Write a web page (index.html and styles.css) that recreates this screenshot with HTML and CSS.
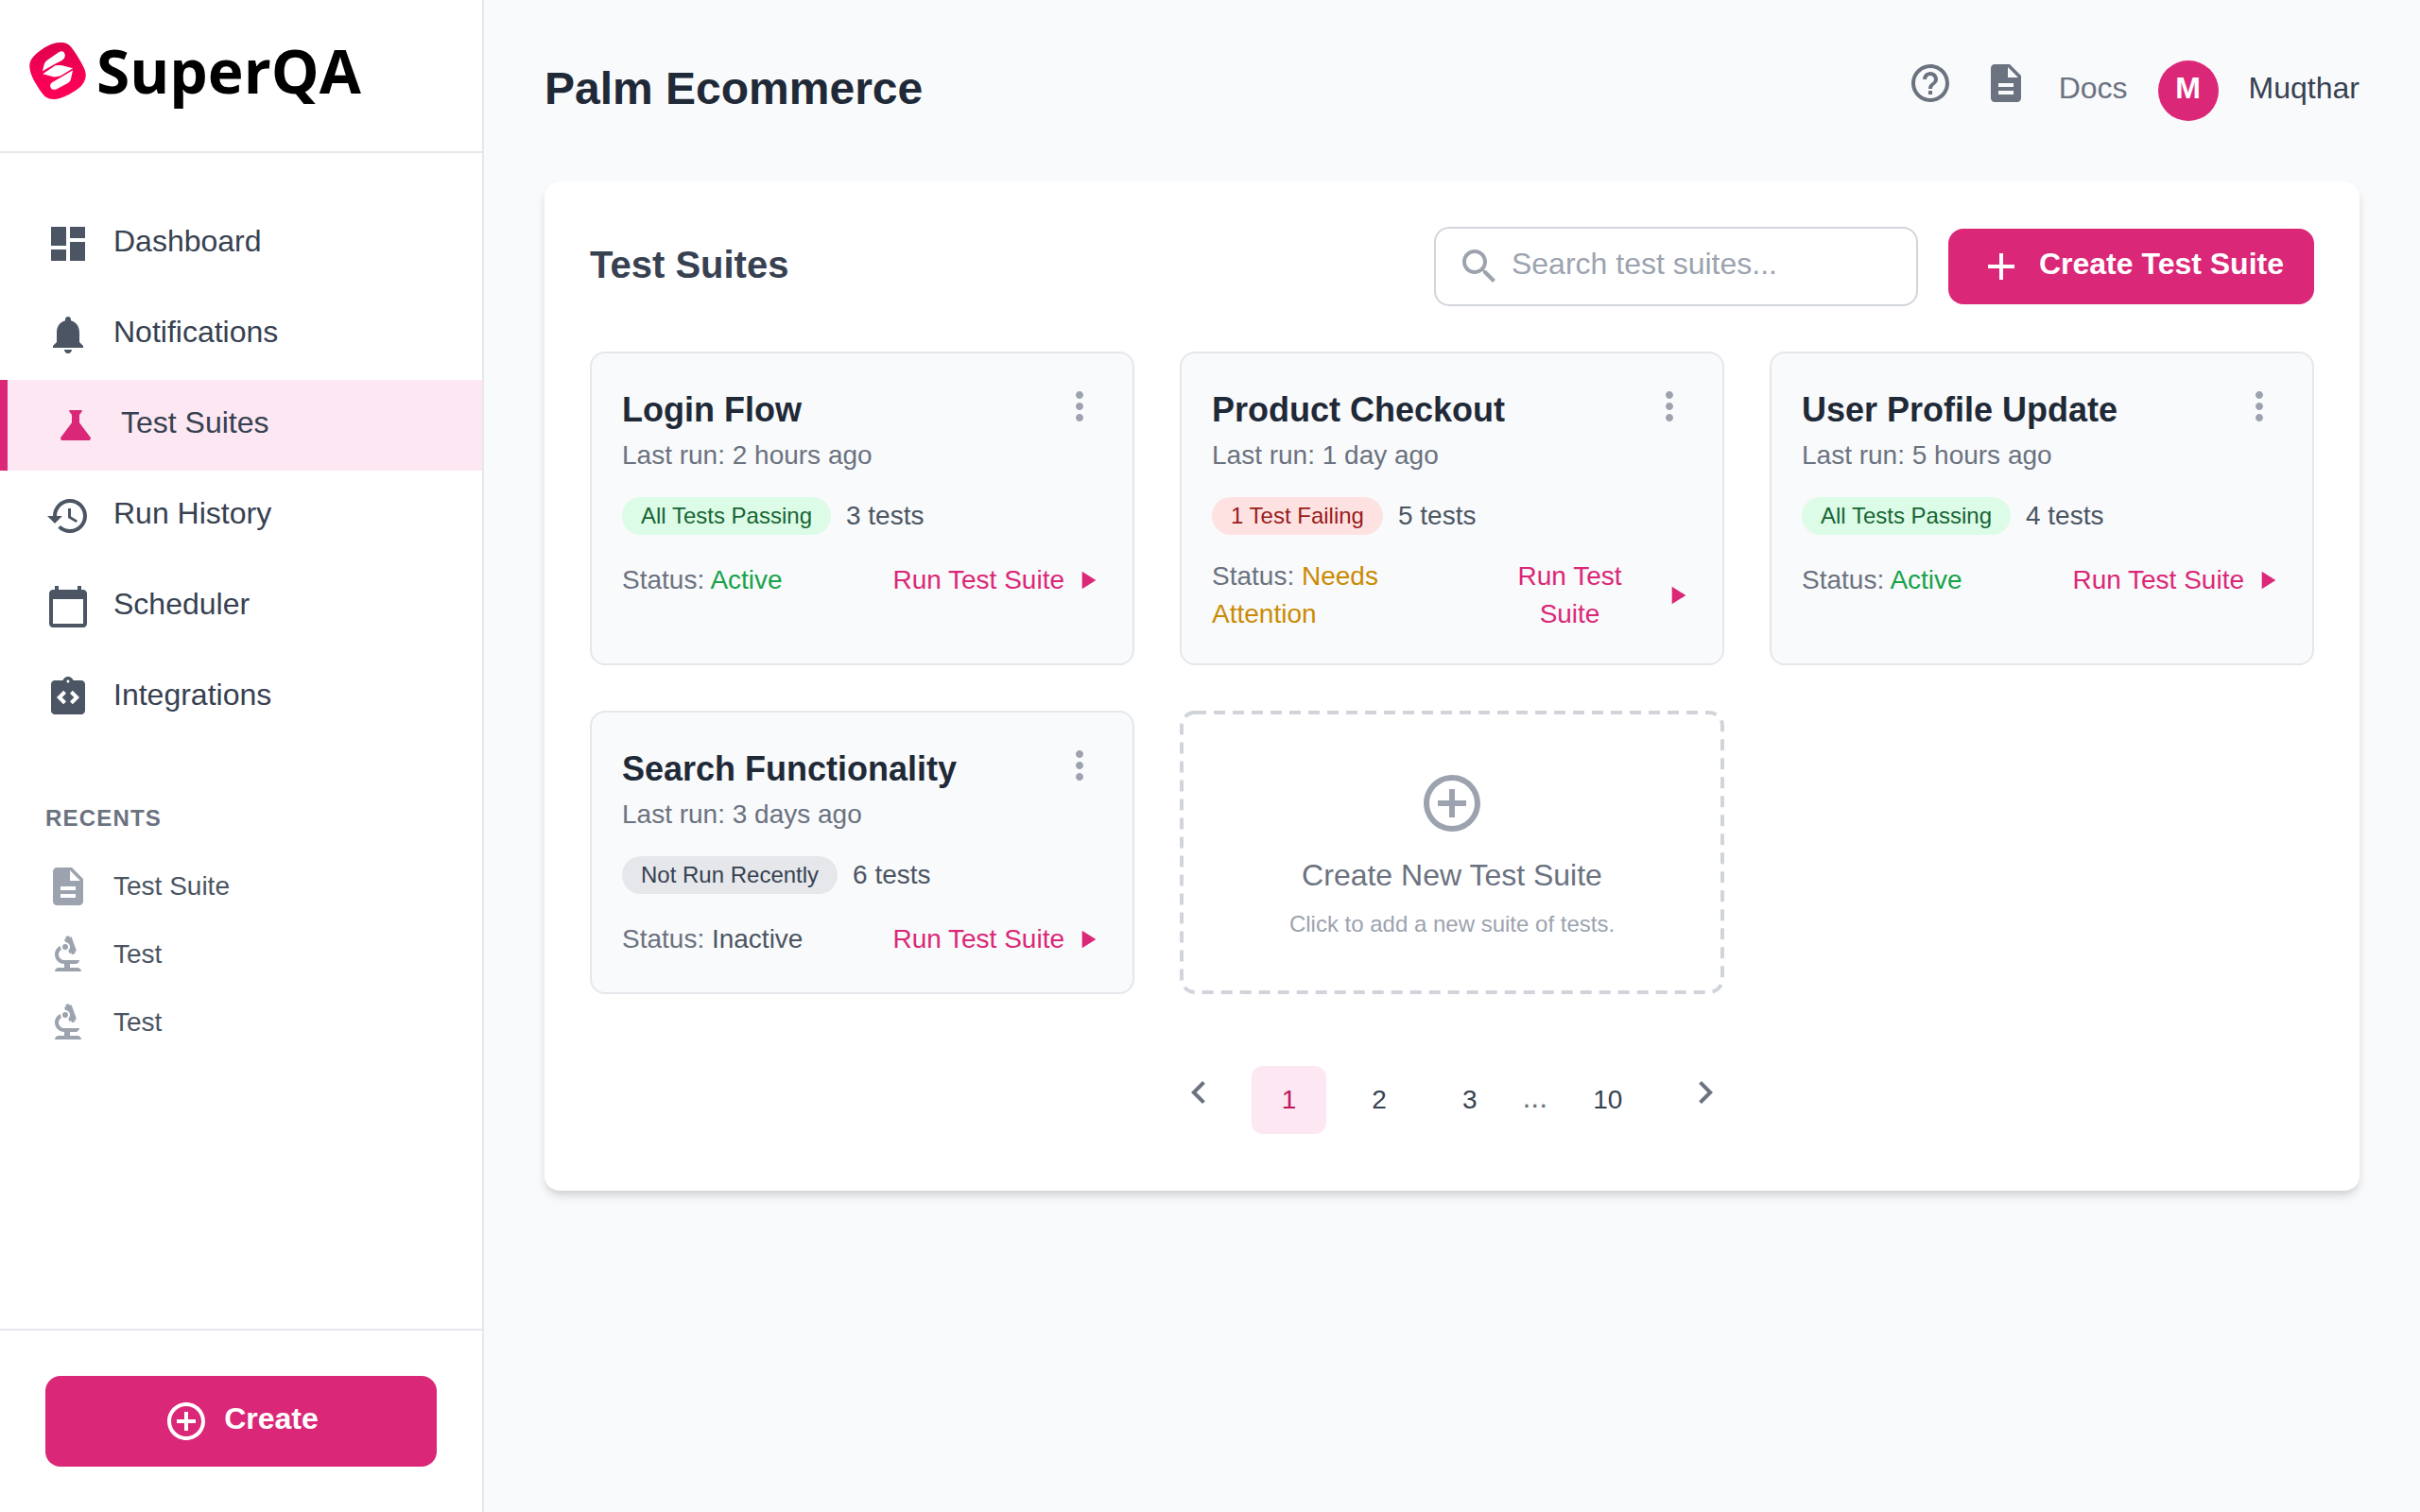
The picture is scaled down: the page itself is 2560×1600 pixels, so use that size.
FILE: index.html
```html
<!DOCTYPE html>
<html lang="en">
<head>
  <meta charset="UTF-8" />
  <meta name="viewport" content="width=device-width, initial-scale=1.0"/>
  <title>SuperQA - Test Suites</title>
  <link rel="stylesheet" href="styles.css">
</head>
<body>
  <!-- Icon set -->
  <svg class="sprite" xmlns="http://www.w3.org/2000/svg">
    <symbol id="dashboard" viewBox="0 0 24 24"><path d="M3 13h8V3H3v10zm0 8h8v-6H3v6zm10 0h8V11h-8v10zm0-18v6h8V3h-8z"/></symbol>
    <symbol id="bell" viewBox="0 0 24 24"><path d="M12 22c1.1 0 2-.9 2-2h-4c0 1.1.89 2 2 2zm6-6v-5c0-3.07-1.64-5.64-4.5-6.32V4c0-.83-.67-1.5-1.5-1.5s-1.5.67-1.5 1.5v.68C7.63 5.36 6 7.92 6 11v5l-2 2v1h16v-1l-2-2z"/></symbol>
    <symbol id="flask" viewBox="0 0 24 24"><path d="M19.8 18.4 14 10.67V6.5l1.35-1.69c.26-.33.03-.81-.39-.81H9.04c-.42 0-.65.48-.39.81L10 6.5v4.17L4.2 18.4c-.49.66-.02 1.6.8 1.6h14c.82 0 1.29-.94.8-1.6z"/></symbol>
    <symbol id="history" viewBox="0 0 24 24"><path d="M13 3c-4.97 0-9 4.03-9 9H1l3.89 3.89.07.14L9 12H6c0-3.87 3.13-7 7-7s7 3.13 7 7-3.13 7-7 7c-1.93 0-3.68-.79-4.94-2.06l-1.42 1.42C8.27 19.99 10.51 21 13 21c4.97 0 9-4.03 9-9s-4.03-9-9-9zm-1 5v5l4.28 2.54.72-1.21-3.5-2.08V8H12z"/></symbol>
    <symbol id="calendar" viewBox="0 0 24 24"><path d="M20 3h-1V1h-2v2H7V1H5v2H4c-1.1 0-2 .9-2 2v16c0 1.1.9 2 2 2h16c1.1 0 2-.9 2-2V5c0-1.1-.9-2-2-2zm0 18H4V8h16v13z"/></symbol>
    <symbol id="integration" viewBox="0 0 24 24"><path d="M19 3h-4.18C14.4 1.84 13.3 1 12 1s-2.4.84-2.82 2H5c-.14 0-.27.01-.4.04-.39.08-.74.28-1.01.55-.18.18-.33.4-.43.64-.1.23-.16.49-.16.77v14c0 .27.06.54.16.78s.25.45.43.64c.27.27.62.47 1.01.55.13.02.26.03.4.03h14c1.1 0 2-.9 2-2V5c0-1.1-.9-2-2-2zm-8 11.17-1.41 1.42L6 12l3.59-3.59L11 9.83 8.83 12 11 14.17zm1-9.92c-.41 0-.75-.34-.75-.75s.34-.75.75-.75.75.34.75.75-.34.75-.75.75zm2.41 11.34L13 14.17 15.17 12 13 9.83l1.41-1.42L18 12l-3.59 3.59z"/></symbol>
    <symbol id="document" viewBox="0 0 24 24"><path d="M14 2H6c-1.1 0-1.99.9-1.99 2L4 20c0 1.1.89 2 1.99 2H18c1.1 0 2-.9 2-2V8l-6-6zm2 16H8v-2h8v2zm0-4H8v-2h8v2zm-3-5V3.5L18.5 9H13z"/></symbol>
    <symbol id="microscope" viewBox="0 0 24 24"><path d="M7 19c-1.1 0-2 .9-2 2h14c0-1.1-.9-2-2-2h-4v-2h3c1.1 0 2-.9 2-2h-8c-1.66 0-3-1.34-3-3 0-1.09.59-2.04 1.46-2.56C8.17 9.03 8 8.54 8 8c0-.21.04-.42.09-.62C6.28 8.13 5 9.92 5 12c0 2.76 2.24 5 5 5v2H7z"/><path d="M10.56 5.51C11.91 5.54 13 6.64 13 8c0 .75-.33 1.41-.85 1.87l.59 1.62.94-.34.34.94 1.88-.68-.34-.94.94-.34-2.74-7.52-.94.34-.34-.94-1.88.68.34.94-.94.35.56 1.53z"/><circle cx="10.5" cy="8" r="1.5"/></symbol>
    <symbol id="add-circle" viewBox="0 0 24 24"><path d="M13 7h-2v4H7v2h4v4h2v-4h4v-2h-4V7zm-1-5C6.48 2 2 6.48 2 12s4.48 10 10 10 10-4.48 10-10S17.52 2 12 2zm0 18c-4.41 0-8-3.59-8-8s3.59-8 8-8 8 3.59 8 8-3.59 8-8 8z"/></symbol>
    <symbol id="add" viewBox="0 0 24 24"><path d="M19 13h-6v6h-2v-6H5v-2h6V5h2v6h6v2z"/></symbol>
    <symbol id="help" viewBox="0 0 24 24"><path d="M11 18h2v-2h-2v2zm1-16C6.48 2 2 6.48 2 12s4.48 10 10 10 10-4.48 10-10S17.52 2 12 2zm0 18c-4.41 0-8-3.59-8-8s3.59-8 8-8 8 3.59 8 8-3.59 8-8 8zm0-14c-2.21 0-4 1.79-4 4h2c0-1.1.9-2 2-2s2 .9 2 2c0 2-3 1.75-3 5h2c0-2.25 3-2.5 3-5 0-2.21-1.79-4-4-4z"/></symbol>
    <symbol id="search" viewBox="0 0 24 24"><path d="M15.5 14h-.79l-.28-.27C15.41 12.59 16 11.11 16 9.5 16 5.91 13.09 3 9.5 3S3 5.91 3 9.5 5.91 16 9.5 16c1.61 0 3.09-.59 4.23-1.57l.27.28v.79l5 4.99L20.49 19l-4.99-5zm-6 0C7.01 14 5 11.99 5 9.5S7.01 5 9.5 5 14 7.01 14 9.5 11.99 14 9.5 14z"/></symbol>
    <symbol id="more" viewBox="0 0 24 24"><path d="M12 8c1.1 0 2-.9 2-2s-.9-2-2-2-2 .9-2 2 .9 2 2 2zm0 2c-1.1 0-2 .9-2 2s.9 2 2 2 2-.9 2-2-.9-2-2-2zm0 6c-1.1 0-2 .9-2 2s.9 2 2 2 2-.9 2-2-.9-2-2-2z"/></symbol>
    <symbol id="play" viewBox="0 0 24 24"><path d="M8 5v14l11-7z"/></symbol>
    <symbol id="prev" viewBox="0 0 24 24"><path d="M15.41 7.41 14 6l-6 6 6 6 1.41-1.41L10.83 12z"/></symbol>
    <symbol id="next" viewBox="0 0 24 24"><path d="M10 6 8.59 7.41 13.17 12l-4.58 4.59L10 18l6-6z"/></symbol>
  </svg>

  <div class="layout">
    <aside class="sidebar">
      <a class="logo" href="#">
        <svg class="logo-mark" viewBox="21 21 181 181">
          <defs>
            <linearGradient id="logoFill" x1="0" y1="0" x2="0" y2="1">
              <stop offset="0" stop-color="#e0004d"/>
              <stop offset="0.6" stop-color="#f70055"/>
              <stop offset="1" stop-color="#ff0058"/>
            </linearGradient>
          </defs>
          <path fill="url(#logoFill)" d="M116 21C138 19 150 28 160 43C173 62 198 98 201 120C203 142 190 160 172 172C150 187 125 200 105 202C82 203 70 195 60 180C45 158 24 128 22 100C20 75 38 60 58 45C75 33 98 22 116 21Z"/>
          <path fill="#fff" d="M63 112L69 89Q72 81 80 76L115 52Q124 47 131 51Q137 59 134 68Q132 74 125 78L104 89Z"/>
          <path fill="#fff" d="M64 121L104 94Q115 93 126 94L160 103L121 127Q112 130 100 131Z"/>
          <path fill="#fff" d="M160 109L153 140Q151 146 145 150L107 170Q92 175 88 162Q86 153 96 147L125 130Z"/>
        </svg>
        <span class="logo-text">SuperQA</span>
      </a>

      <nav class="menu">
        <a class="menu-item" href="#"><svg class="icon"><use href="#dashboard"/></svg><span class="label">Dashboard</span></a>
        <a class="menu-item" href="#"><svg class="icon"><use href="#bell"/></svg><span class="label">Notifications</span></a>
        <a class="menu-item active" href="#"><svg class="icon"><use href="#flask"/></svg><span class="label">Test Suites</span></a>
        <a class="menu-item" href="#"><svg class="icon"><use href="#history"/></svg><span class="label">Run History</span></a>
        <a class="menu-item" href="#"><svg class="icon"><use href="#calendar"/></svg><span class="label">Scheduler</span></a>
        <a class="menu-item" href="#"><svg class="icon"><use href="#integration"/></svg><span class="label">Integrations</span></a>
      </nav>

      <div class="recents">
        <h3>RECENTS</h3>
        <a class="recent-item" href="#"><svg class="icon"><use href="#document"/></svg><span>Test Suite</span></a>
        <a class="recent-item" href="#"><svg class="icon"><use href="#microscope"/></svg><span>Test</span></a>
        <a class="recent-item" href="#"><svg class="icon"><use href="#microscope"/></svg><span>Test</span></a>
      </div>

      <div class="sidebar-footer">
        <button class="btn btn-block"><svg class="icon"><use href="#add-circle"/></svg><span class="label">Create</span></button>
      </div>
    </aside>

    <main class="main">
      <header class="header">
        <h1>Palm Ecommerce</h1>
        <div class="header-actions">
          <button class="icon-btn" aria-label="Help"><svg class="icon"><use href="#help"/></svg></button>
          <button class="icon-btn" aria-label="Documents"><svg class="icon"><use href="#document"/></svg></button>
          <a class="docs label" href="#">Docs</a>
          <div class="avatar"><span class="label">M</span></div>
          <span class="user label">Muqthar</span>
        </div>
      </header>

      <section class="panel">
        <div class="panel-header">
          <h2>Test Suites</h2>
          <div class="panel-tools">
            <label class="search">
              <svg class="icon"><use href="#search"/></svg>
              <input type="text" placeholder="Search test suites..." aria-label="Search test suites">
            </label>
            <button class="btn"><svg class="icon"><use href="#add"/></svg><span class="label">Create Test Suite</span></button>
          </div>
        </div>

        <div class="grid">
          <article class="card">
            <div class="card-top">
              <div>
                <h3>Login Flow</h3>
                <p class="last-run">Last run: 2 hours ago</p>
              </div>
              <button class="more-btn" aria-label="More options"><svg class="icon"><use href="#more"/></svg></button>
            </div>
            <div class="card-tests"><span class="badge passing">All Tests Passing</span><span>3 tests</span></div>
            <div class="card-bottom">
              <span>Status: <span class="active-status">Active</span></span>
              <button class="run-btn"><span>Run Test Suite</span><svg class="icon-small"><use href="#play"/></svg></button>
            </div>
          </article>

          <article class="card">
            <div class="card-top">
              <div>
                <h3>Product Checkout</h3>
                <p class="last-run">Last run: 1 day ago</p>
              </div>
              <button class="more-btn" aria-label="More options"><svg class="icon"><use href="#more"/></svg></button>
            </div>
            <div class="card-tests"><span class="badge failing">1 Test Failing</span><span>5 tests</span></div>
            <div class="card-bottom">
              <span>Status: <span class="attention-status">Needs Attention</span></span>
              <button class="run-btn"><span>Run Test Suite</span><svg class="icon-small"><use href="#play"/></svg></button>
            </div>
          </article>

          <article class="card">
            <div class="card-top">
              <div>
                <h3>User Profile Update</h3>
                <p class="last-run">Last run: 5 hours ago</p>
              </div>
              <button class="more-btn" aria-label="More options"><svg class="icon"><use href="#more"/></svg></button>
            </div>
            <div class="card-tests"><span class="badge passing">All Tests Passing</span><span>4 tests</span></div>
            <div class="card-bottom">
              <span>Status: <span class="active-status">Active</span></span>
              <button class="run-btn"><span>Run Test Suite</span><svg class="icon-small"><use href="#play"/></svg></button>
            </div>
          </article>

          <article class="card">
            <div class="card-top">
              <div>
                <h3>Search Functionality</h3>
                <p class="last-run">Last run: 3 days ago</p>
              </div>
              <button class="more-btn" aria-label="More options"><svg class="icon"><use href="#more"/></svg></button>
            </div>
            <div class="card-tests"><span class="badge idle">Not Run Recently</span><span>6 tests</span></div>
            <div class="card-bottom">
              <span>Status: <span class="inactive-status">Inactive</span></span>
              <button class="run-btn"><span>Run Test Suite</span><svg class="icon-small"><use href="#play"/></svg></button>
            </div>
          </article>

          <button class="new-card">
            <svg class="dashes"><rect x="2" y="2" rx="14"/></svg>
            <svg class="icon-large"><use href="#add-circle"/></svg>
            <span class="new-title">Create New Test Suite</span>
            <span class="new-text">Click to add a new suite of tests.</span>
          </button>
        </div>

        <nav class="pagination" aria-label="Pagination">
          <button class="page-arrow" aria-label="Previous page"><svg class="icon"><use href="#prev"/></svg></button>
          <button class="page current">1</button>
          <button class="page">2</button>
          <button class="page">3</button>
          <span class="dots label">...</span>
          <button class="page">10</button>
          <button class="page-arrow" aria-label="Next page"><svg class="icon"><use href="#next"/></svg></button>
        </nav>
      </section>
    </main>
  </div>
</body>
</html>
```

FILE: styles.css
```css
* {
  box-sizing: border-box;
  margin: 0;
  padding: 0;
}

body {
  font-family: "Liberation Sans", Arial, sans-serif;
  font-size: 32px;
  line-height: 48px;
  background: #f9fafb;
  color: #374151;
}

a {
  color: inherit;
  text-decoration: none;
}

button {
  font: inherit;
  color: inherit;
  background: none;
  border: none;
  cursor: pointer;
}

.sprite {
  display: none;
}

.icon,
.icon-small,
.icon-large {
  display: block;
  flex-shrink: 0;
  width: 48px;
  height: 48px;
  fill: currentColor;
}

.icon-small {
  width: 32px;
  height: 32px;
}

.icon-large {
  width: 72px;
  height: 72px;
}

/* text next to an icon sits slightly above its centre */
.label {
  padding-bottom: 6px;
}

.layout {
  display: flex;
  min-height: 100vh;
}

/* Sidebar */
.sidebar {
  display: flex;
  flex-direction: column;
  flex-shrink: 0;
  width: 512px;
  background: #fff;
  border-right: 2px solid #e5e7eb;
}

.logo {
  display: flex;
  align-items: center;
  gap: 10px;
  height: 162px;
  padding: 0 30px 10px;
  border-bottom: 2px solid #e5e7eb;
}

.logo-mark {
  width: 62px;
  height: 60px;
}

.logo-text {
  font-family: "Open Sans", "Noto Sans", sans-serif;
  font-size: 64px;
  font-weight: 700;
  color: #000;
}

.menu {
  padding-top: 48px;
}

.menu-item {
  display: flex;
  align-items: center;
  gap: 24px;
  padding: 21px 48px;
}

.menu-item .icon {
  color: #4b5563;
}

.menu-item.active {
  background: #fce7f3;
  border-left: 8px solid #db2777;
}

.menu-item.active .icon {
  color: #db2777;
}

.recents {
  padding: 64px 48px 0;
}

.recents h3 {
  font-size: 24px;
  line-height: 32px;
  letter-spacing: 0.05em;
  color: #6b7280;
  margin-bottom: 20px;
}

.recent-item {
  display: flex;
  align-items: center;
  gap: 24px;
  padding: 12px 0;
  font-size: 28px;
  color: #4b5563;
}

.recent-item .icon {
  color: #9ca3af;
}

.sidebar-footer {
  margin-top: auto;
  padding: 48px;
  border-top: 2px solid #e5e7eb;
}

.btn {
  display: flex;
  align-items: center;
  justify-content: center;
  gap: 16px;
  padding: 13px 32px;
  background: #db2777;
  color: #fff;
  font-weight: 700;
  border-radius: 16px;
}

.btn-block {
  width: 100%;
  padding: 21px 32px;
}

/* Main area */
.main {
  flex: 1;
  padding: 64px;
}

.header {
  display: flex;
  align-items: center;
  justify-content: space-between;
  margin-bottom: 64px;
}

.header h1 {
  font-size: 48px;
  line-height: 60px;
  padding-bottom: 4px;
  color: #1f2937;
}

.header-actions {
  display: flex;
  align-items: center;
  gap: 32px;
}

.icon-btn {
  padding-bottom: 16px;
  color: #6b7280;
}

.docs {
  color: #6b7280;
}

.avatar {
  display: flex;
  align-items: center;
  justify-content: center;
  width: 64px;
  height: 64px;
  border-radius: 50%;
  background: #db2777;
  color: #fff;
  font-weight: 700;
}

.panel {
  padding: 48px;
  background: #fff;
  border-radius: 16px;
  box-shadow: 0 8px 12px -2px rgba(0, 0, 0, 0.1), 0 4px 8px -2px rgba(0, 0, 0, 0.1);
}

.panel-header {
  display: flex;
  align-items: center;
  justify-content: space-between;
  margin-bottom: 48px;
}

.panel-header h2 {
  font-size: 40px;
  line-height: 56px;
  padding-bottom: 4px;
}

.panel-tools {
  display: flex;
  align-items: center;
  gap: 32px;
}

.search {
  display: flex;
  align-items: center;
  gap: 10px;
  width: 512px;
  height: 84px;
  padding: 0 22px;
  border: 2px solid #d1d5db;
  border-radius: 16px;
}

.search .icon {
  color: #9ca3af;
}

.search input {
  flex: 1;
  min-width: 0;
  padding-bottom: 6px;
  font: inherit;
  color: inherit;
  background: none;
  border: none;
  outline: none;
}

.search input::placeholder {
  color: #9ca3af;
}

/* Test suite cards */
.grid {
  display: grid;
  grid-template-columns: repeat(3, 1fr);
  gap: 48px;
}

.card {
  padding: 32px;
  background: #f9fafb;
  border: 2px solid #e5e7eb;
  border-radius: 16px;
  font-size: 28px;
  line-height: 40px;
  color: #6b7280;
}

.card-top {
  display: flex;
  align-items: flex-start;
  justify-content: space-between;
}

.card h3 {
  font-size: 36px;
  line-height: 56px;
  color: #1f2937;
}

.more-btn {
  color: #9ca3af;
}

.card-tests {
  display: flex;
  align-items: center;
  gap: 16px;
  margin: 24px 0;
  color: #4b5563;
}

.badge {
  padding: 0 20px;
  font-size: 24px;
  border-radius: 20px;
}

.passing {
  background: #dcfce7;
  color: #166534;
}

.failing {
  background: #fee2e2;
  color: #991b1b;
}

.idle {
  background: #e5e7eb;
  color: #374151;
}

.card-bottom {
  display: flex;
  align-items: center;
  justify-content: space-between;
  min-height: 48px;
}

.active-status {
  color: #16a34a;
}

.attention-status {
  color: #ca8a04;
}

.inactive-status {
  color: #4b5563;
}

.run-btn {
  display: flex;
  align-items: center;
  gap: 8px;
  color: #db2777;
}

.new-card {
  position: relative;
  display: flex;
  flex-direction: column;
  align-items: center;
  justify-content: center;
  padding-top: 4px;
  border-radius: 16px;
  color: #9ca3af;
}

/* dashed outline with longer dashes than a css border gives */
.dashes {
  position: absolute;
  inset: 0;
  width: 100%;
  height: 100%;
}

.dashes rect {
  width: calc(100% - 4px);
  height: calc(100% - 4px);
  fill: none;
  stroke: #d1d5db;
  stroke-width: 4px;
  stroke-dasharray: 12 8;
}

.new-title {
  margin: 16px 0 12px;
  color: #6b7280;
}

.new-text {
  font-size: 24px;
  line-height: 32px;
}

/* Pagination */
.pagination {
  display: flex;
  align-items: center;
  justify-content: center;
  gap: 16px;
  margin-top: 64px;
}

.page {
  padding: 12px 32px;
  font-size: 28px;
  border-radius: 12px;
}

.page.current {
  background: #fce7f3;
  color: #be185d;
}

.page-arrow {
  padding: 16px 16px 32px;
  color: #6b7280;
}

.dots {
  color: #6b7280;
}
```
